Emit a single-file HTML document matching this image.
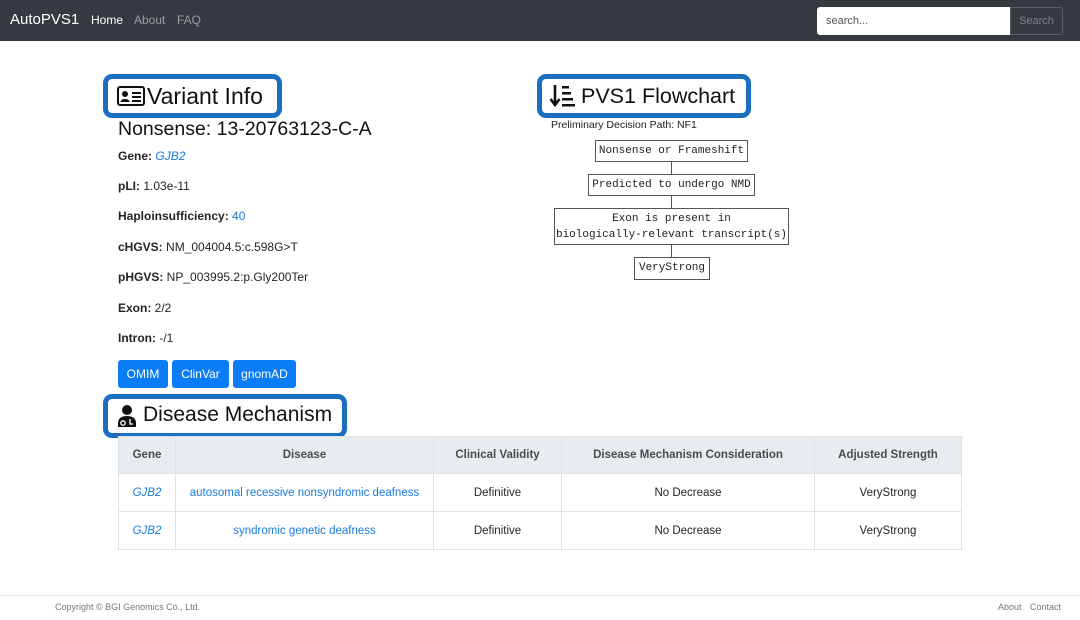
<!DOCTYPE html>
<html><head><meta charset="utf-8"><style>
*{box-sizing:border-box;margin:0;padding:0}
body{width:1080px;height:620px;background:#fff;font-family:"Liberation Sans",sans-serif;color:#212529;position:relative;overflow:hidden}
.a{position:absolute;white-space:nowrap}
nav{position:absolute;left:0;top:0;width:1080px;height:41px;background:#343a40}
.box{position:absolute;border:5px solid #1a6fbf;border-radius:9px;background:#fff}
.ttl{color:#111}
.lbl{font-size:12px}
.lbl b{font-weight:bold}
.btn{position:absolute;top:360px;height:28px;background:#0a7cf5;color:#fff;font-size:12px;line-height:28px;text-align:center;border-radius:3px}
.fc{position:absolute;border:1px solid #555;background:#fff;font-family:"Liberation Mono",monospace;font-size:11px;text-align:center;line-height:16px;color:#222}
.ln{position:absolute;left:671px;width:1px;background:#555}
table{position:absolute;left:118px;top:436px;border-collapse:collapse;font-size:11.5px;table-layout:fixed}
th{background:#e9ecef;height:37px;font-weight:bold;color:#454c55;border:1px solid #dee2e6;font-size:11.5px}
td{height:38px;text-align:center;border:1px solid #dee2e6}
a{color:#1a7be0;text-decoration:none}
</style></head><body>
<nav>
<div class="a" style="left:10px;top:11px;color:#fff;font-size:15px">AutoPVS1</div>
<div class="a" style="left:91px;top:13px;color:#fff;font-size:12px">Home</div>
<div class="a" style="left:134px;top:13px;color:#9a9da1;font-size:12px">About</div>
<div class="a" style="left:177px;top:13px;color:#9a9da1;font-size:12px">FAQ</div>
<div class="a" style="left:817px;top:7px;width:194px;height:28px;background:#fff;border-radius:3px 0 0 3px;font-size:11px;color:#555;padding:8px 9px">search...</div>
<div class="a" style="left:1010px;top:7px;width:53px;height:28px;border:1px solid #5a6168;border-radius:0 3px 3px 0;font-size:11px;color:#7d8388;padding:7px 0;text-align:center">Search</div>
</nav>

<div class="box" style="left:103px;top:74px;width:179px;height:44px"></div>
<svg class="a" style="left:117px;top:86px" width="28" height="20" viewBox="0 0 28 20"><rect x="1" y="1" width="26" height="18" rx="2" fill="none" stroke="#111" stroke-width="2"/><circle cx="8" cy="8" r="3" fill="#111"/><path d="M3.5 16c0-4 9-4 9 0z" fill="#111"/><rect x="15" y="6" width="9" height="2" fill="#111"/><rect x="15" y="10" width="9" height="2" fill="#111"/><rect x="15" y="14" width="9" height="2" fill="#111"/></svg>
<div class="a ttl" style="left:147px;top:83px;font-size:23px">Variant Info</div>
<div class="a" style="left:118px;top:118px;font-size:19.5px;color:#111">Nonsense: 13-20763123-C-A</div>
<div class="a lbl" style="left:118px;top:149px"><b>Gene:</b> <a><i>GJB2</i></a></div>
<div class="a lbl" style="left:118px;top:179px"><b>pLI:</b> 1.03e-11</div>
<div class="a lbl" style="left:118px;top:209px"><b>Haploinsufficiency:</b> <a>40</a></div>
<div class="a lbl" style="left:118px;top:240px"><b>cHGVS:</b> NM_004004.5:c.598G&gt;T</div>
<div class="a lbl" style="left:118px;top:270px"><b>pHGVS:</b> NP_003995.2:p.Gly200Ter</div>
<div class="a lbl" style="left:118px;top:301px"><b>Exon:</b> 2/2</div>
<div class="a lbl" style="left:118px;top:331px"><b>Intron:</b> -/1</div>
<div class="btn" style="left:118px;width:50px">OMIM</div>
<div class="btn" style="left:172px;width:57px">ClinVar</div>
<div class="btn" style="left:233px;width:63px">gnomAD</div>

<div class="box" style="left:537px;top:74px;width:214px;height:44px"></div>
<svg class="a" style="left:549px;top:83px" width="28" height="26" viewBox="0 0 28 26"><path d="M6 2v18M1.5 16l4.5 6 4.5-6" fill="none" stroke="#111" stroke-width="2.6"/><rect x="13" y="3" width="7" height="2.5" fill="#111"/><rect x="13" y="9" width="9" height="2.5" fill="#111"/><rect x="13" y="15" width="11" height="2.5" fill="#111"/><rect x="13" y="21" width="13" height="2.5" fill="#111"/></svg>
<div class="a ttl" style="left:581px;top:84px;font-size:21.5px">PVS1 Flowchart</div>
<div class="a" style="left:551px;top:119px;font-size:10.5px;color:#222">Preliminary Decision Path: NF1</div>
<div class="ln" style="top:161px;height:13px"></div>
<div class="ln" style="top:195px;height:13px"></div>
<div class="ln" style="top:244px;height:13px"></div>
<div class="fc" style="left:595px;top:140px;width:153px;height:22px;padding-top:2px">Nonsense or Frameshift</div>
<div class="fc" style="left:588px;top:174px;width:167px;height:22px;padding-top:2px">Predicted to undergo NMD</div>
<div class="fc" style="left:554px;top:208px;width:235px;height:37px;padding-top:2px">Exon is present in<br>biologically-relevant transcript(s)</div>
<div class="fc" style="left:634px;top:257px;width:76px;height:23px;padding-top:2px">VeryStrong</div>

<div class="box" style="left:103px;top:394px;width:244px;height:44px"></div>
<svg class="a" style="left:116px;top:404px" width="22" height="24" viewBox="0 0 22 24"><circle cx="11" cy="6" r="5" fill="#111"/><path d="M2 23v-4c0-5 4-7 9-7s9 2 9 7v4z" fill="#111"/><circle cx="7" cy="19" r="2.2" fill="none" stroke="#fff" stroke-width="1.3"/><path d="M14 15v5h3" fill="none" stroke="#fff" stroke-width="1.3"/></svg>
<div class="a ttl" style="left:143px;top:403px;font-size:21px">Disease Mechanism</div>

<table>
<tr><th style="width:57px">Gene</th><th style="width:258px">Disease</th><th style="width:128px">Clinical Validity</th><th style="width:253px">Disease Mechanism Consideration</th><th style="width:147px">Adjusted Strength</th></tr>
<tr><td><a><i>GJB2</i></a></td><td><a>autosomal recessive nonsyndromic deafness</a></td><td>Definitive</td><td>No Decrease</td><td>VeryStrong</td></tr>
<tr><td><a><i>GJB2</i></a></td><td><a>syndromic genetic deafness</a></td><td>Definitive</td><td>No Decrease</td><td>VeryStrong</td></tr>
</table>

<div class="a" style="left:0;top:595px;width:1080px;height:1px;background:#e5e5e5"></div>
<div class="a" style="left:55px;top:602px;font-size:9px;color:#777">Copyright © BGI Genomics Co., Ltd.</div>
<div class="a" style="left:998px;top:602px;font-size:9px;color:#777">About</div>
<div class="a" style="left:1030px;top:602px;font-size:9px;color:#777">Contact</div>
</body></html>
